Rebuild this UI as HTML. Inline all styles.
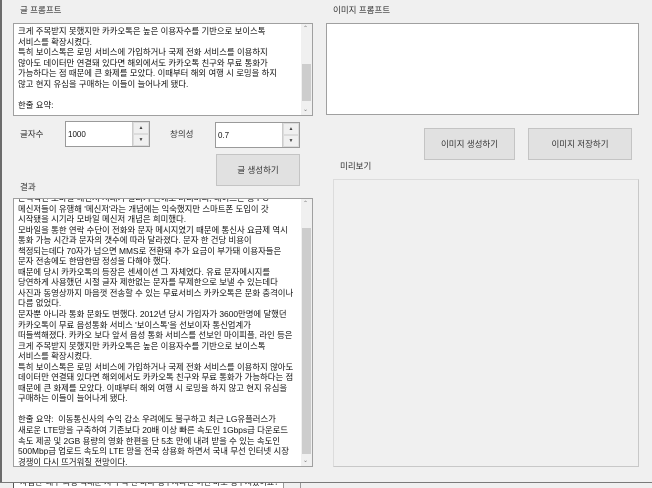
<!DOCTYPE html>
<html><head><meta charset="utf-8"><style>
*{margin:0;padding:0;box-sizing:border-box}
body{width:652px;height:488px;background:#f0f0f0;position:relative;overflow:hidden;font-family:"Liberation Sans","Noto Sans CJK KR",sans-serif;font-size:8px;color:#111}
.a{position:absolute}
.lbl{font-size:8.5px;color:#333}
.tb{background:#fff;border:1px solid #a0a0a0}
.txt{position:absolute;left:4px;top:2px;line-height:10.55px;white-space:nowrap;font-size:8.4px}
.sb{position:absolute;right:0;top:0;bottom:0;width:11px;background:#f0f0f0}
.th{position:absolute;left:1px;right:1px;background:#cdcdcd}
.arr{position:absolute;left:2px;font-size:6px;color:#777}
.btn{position:absolute;background:#e1e1e1;border:1px solid #c4c4c4;font-size:8.5px;color:#333;display:flex;align-items:center;justify-content:center}
.num{position:absolute;background:#fff;border:1px solid #9a9a9a}
.num span{position:absolute;left:2px;top:8px;font-size:8px}
.sp{position:absolute;right:0;top:0;width:17px;height:100%;border-left:1px solid #ccc}
.sp div{height:50%;background:#f0f0f0;border:1px solid #dcdcdc;font-size:5px;text-align:center;line-height:11px;color:#444}
</style></head><body>
<div class="a" style="left:0;top:0;width:2px;height:483px;background:#6b6b6b"></div>
<div class="a lbl" style="left:20px;top:4px">글 프롬프트</div>
<div class="a tb" style="left:13px;top:23px;width:300px;height:93px;overflow:hidden">
<div class="txt">크게 주목받지 못했지만 카카오톡은 높은 이용자수를 기반으로 보이스톡<br>서비스를 확장시켰다.<br>특히 보이스톡은 로밍 서비스에 가입하거나 국제 전화 서비스를 이용하지<br>않아도 데이터만 연결돼 있다면 해외에서도 카카오톡 친구와 무료 통화가<br>가능하다는 점 때문에 큰 화제를 모았다. 이때부터 해외 여행 시 로밍을 하지<br>않고 현지 유심을 구매하는 이들이 늘어나게 됐다.<br><br>한줄 요약:</div>
<div class="sb"><div class="arr" style="top:1px">⌃</div><div class="th" style="top:40px;height:37px"></div><div class="arr" style="bottom:2px">⌄</div></div>
</div>
<div class="a lbl" style="left:20px;top:128px">글자수</div>
<div class="num" style="left:65px;top:121px;width:85px;height:26px"><span>1000</span><div class="sp"><div>▲</div><div>▼</div></div></div>
<div class="a lbl" style="left:170px;top:128px">창의성</div>
<div class="num" style="left:215px;top:122px;width:85px;height:26px"><span>0.7</span><div class="sp"><div>▲</div><div>▼</div></div></div>
<div class="btn" style="left:216px;top:154px;width:84px;height:32px">글 생성하기</div>
<div class="a lbl" style="left:20px;top:181px">결과</div>
<div class="a tb" style="left:13px;top:198px;width:300px;height:269px;overflow:hidden">
<div class="txt" style="top:-6px">본격적인 모바일 메신저 시대가 열리기 전에도 버디버디, 네이트온 등 PC<br>메신저들이 유행해 '메신저'라는 개념에는 익숙했지만 스마트폰 도입이 갓<br>시작됐을 시기라 모바일 메신저 개념은 희미했다.<br>모바일을 통한 연락 수단이 전화와 문자 메시지였기 때문에 통신사 요금제 역시<br>통화 가능 시간과 문자의 갯수에 따라 달라졌다. 문자 한 건당 비용이<br>책정되는데다 70자가 넘으면 MMS로 전환돼 추가 요금이 부가돼 이용자들은<br>문자 전송에도 한땀한땀 정성을 다해야 했다.<br>때문에 당시 카카오톡의 등장은 센세이션 그 자체였다. 유료 문자메시지를<br>당연하게 사용했던 시절 글자 제한없는 문자를 무제한으로 보낼 수 있는데다<br>사진과 동영상까지 마음껏 전송할 수 있는 무료서비스 카카오톡은 문화 충격이나<br>다름 없었다.<br>문자뿐 아니라 통화 문화도 변했다. 2012년 당시 가입자가 3600만명에 달했던<br>카카오톡이 무료 음성통화 서비스 '보이스톡'을 선보이자 통신업계가<br>떠들썩해졌다. 카카오 보다 앞서 음성 통화 서비스를 선보인 마이피플, 라인 등은<br>크게 주목받지 못했지만 카카오톡은 높은 이용자수를 기반으로 보이스톡<br>서비스를 확장시켰다.<br>특히 보이스톡은 로밍 서비스에 가입하거나 국제 전화 서비스를 이용하지 않아도<br>데이터만 연결돼 있다면 해외에서도 카카오톡 친구와 무료 통화가 가능하다는 점<br>때문에 큰 화제를 모았다. 이때부터 해외 여행 시 로밍을 하지 않고 현지 유심을<br>구매하는 이들이 늘어나게 됐다.<br><br>한줄 요약:&nbsp; 이동통신사의 수익 감소 우려에도 불구하고 최근 LG유플러스가<br>새로운 LTE망을 구축하여 기존보다 20배 이상 빠른 속도인 1Gbps급 다운로드<br>속도 제공 및 2GB 용량의 영화 한편을 단 5초 만에 내려 받을 수 있는 속도인<br>500Mbp급 업로드 속도의 LTE 망을 전국 상용화 하면서 국내 무선 인터넷 시장<br>경쟁이 다시 뜨거워질 전망이다.</div>
<div class="sb"><div class="arr" style="top:1px">⌃</div><div class="th" style="top:29px;height:226px"></div><div class="arr" style="bottom:2px">⌄</div></div>
</div>
<div class="a lbl" style="left:333px;top:4px">이미지 프롬프트</div>
<div class="a tb" style="left:326px;top:23px;width:313px;height:92px"></div>
<div class="btn" style="left:424px;top:128px;width:91px;height:32px">이미지 생성하기</div>
<div class="btn" style="left:528px;top:128px;width:104px;height:32px">이미지 저장하기</div>
<div class="a lbl" style="left:340px;top:160px">미리보기</div>
<div class="a" style="left:333px;top:179px;width:306px;height:288px;border:1px solid #c8c8c8;border-top-color:#dcdcdc;border-left-color:#dcdcdc"></div>
<div class="a" style="left:0;top:482px;width:652px;height:1px;background:#7a7a7a"></div>
<div class="a" style="left:13px;top:483px;width:270px;height:5px;background:#fff;border-left:1px solid #555;overflow:hidden"><div style="position:absolute;left:6px;top:-6px;font-size:8px;white-space:nowrap">사임진' 대우 의생 석배군 시 주역 한 마다 행주시다면 이떤 마모 행주시겠이요?</div></div>
<div class="a" style="left:283px;top:483px;width:1px;height:5px;background:#999"></div>
<div class="a" style="left:300px;top:483px;width:1px;height:5px;background:#999"></div>
</body></html>
